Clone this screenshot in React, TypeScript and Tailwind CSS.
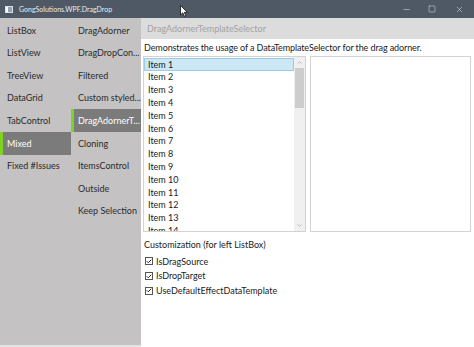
import React from "react";
import { Minus, Square, X, ChevronUp, ChevronDown, Check } from "lucide-react";

const leftNav = ["ListBox", "ListView", "TreeView", "DataGrid", "TabControl", "Mixed", "Fixed #Issues"];
const rightNav = [
  "DragAdorner",
  "DragDropCon...",
  "Filtered",
  "Custom styled...",
  "DragAdornerT...",
  "Cloning",
  "ItemsControl",
  "Outside",
  "Keep Selection",
];

const items = Array.from({ length: 14 }, (_, i) => `Item ${i + 1}`);

const NavItem: React.FC<{ label: string; selected?: boolean }> = ({ label, selected }) => (
  <div
    className={
      selected
        ? "h-[22.6px] flex items-center pl-[4px] whitespace-nowrap bg-[#7b7b7b] text-white border-l-[3px] border-[#7ed321]"
        : "h-[22.6px] flex items-center pl-[4px] whitespace-nowrap text-[#2b2b2b] border-l-[3px] border-transparent"
    }
  >
    {label}
  </div>
);

const CheckRow: React.FC<{ label: string }> = ({ label }) => (
  <div className="h-[14.7px] flex items-center gap-[3px] pl-[4px]">
    <div className="w-[8px] h-[8px] border border-[#555] bg-white flex items-center justify-center">
      <Check className="w-[7px] h-[7px] text-[#222]" strokeWidth={4} />
    </div>
    <span>{label}</span>
  </div>
);

const App: React.FC = () => {
  return (
    <div className="relative w-[474px] h-[347px] overflow-hidden flex flex-col bg-white text-[9px] font-['Lato',sans-serif] text-[#222]">
      {/* title bar */}
      <div className="h-[18px] bg-[#4f5966] flex items-center text-white">
        <div className="ml-[5px] w-[8px] h-[7px] border border-[#d6dde6] bg-[#8fa3bb] flex">
          <div className="w-[2px] bg-white" />
        </div>
        <span className="ml-[6px] text-[7px] text-[#e8ecf0]">GongSolutions.WPF.DragDrop</span>
        <div className="ml-auto flex items-center text-[#d9dee4]">
          <div className="w-[26px] flex justify-center">
            <Minus className="w-[9px] h-[9px]" strokeWidth={1.5} />
          </div>
          <div className="w-[26px] flex justify-center">
            <Square className="w-[8px] h-[8px]" strokeWidth={1.5} />
          </div>
          <div className="w-[28px] flex justify-center mr-[1px]">
            <X className="w-[9px] h-[9px]" strokeWidth={1.5} />
          </div>
        </div>
      </div>

      <div className="flex-1 flex min-h-0">
        {/* navigation */}
        <div className="w-[141px] bg-[#c4c2c2] flex border-b-[2px] border-[#e4e4e4]">
          <div className="w-[71px] flex flex-col pt-[1px]">
            {leftNav.map((l) => (
              <NavItem key={l} label={l} selected={l === "Mixed"} />
            ))}
          </div>
          <div className="w-[70px] flex flex-col pt-[1px]">
            {rightNav.map((l) => (
              <NavItem key={l} label={l} selected={l === "DragAdornerT..."} />
            ))}
          </div>
        </div>

        {/* content */}
        <div className="flex-1 flex flex-col">
          <div className="h-[21px] bg-[#dcdcdc] flex items-center pl-[6px] text-[#a3a3a3]">
            DragAdornerTemplateSelector
          </div>
          <div className="pl-[3px] h-[17px] flex items-center tracking-[-0.1px]">
            Demonstrates the usage of a DataTemplateSelector for the drag adorner.
          </div>
          <div className="flex gap-[4px] pl-[2px] pr-[3px] h-[176px]">
            <div className="w-[163px] border border-[#d3d3d3] flex">
              <div className="flex-1 flex flex-col overflow-hidden pt-[1px]">
                {items.map((it, i) => (
                  <div
                    key={it}
                    className={
                      i === 0
                        ? "h-[12.8px] shrink-0 flex items-center pl-[3px] bg-[#cce8f7] border border-[#9ccbe8]"
                        : "h-[12.8px] shrink-0 flex items-center pl-[3px] border border-transparent"
                    }
                  >
                    {it}
                  </div>
                ))}
              </div>
              <div className="w-[11px] bg-[#f0f0f0] flex flex-col items-center">
                <div className="h-[11px] flex items-center justify-center">
                  <ChevronUp className="w-[7px] h-[7px] text-[#9a9a9a]" strokeWidth={2} />
                </div>
                <div className="w-[9px] h-[40px] bg-[#cdcdcd]" />
                <div className="mt-auto h-[11px] flex items-center justify-center">
                  <ChevronDown className="w-[7px] h-[7px] text-[#9a9a9a]" strokeWidth={2} />
                </div>
              </div>
            </div>
            <div className="flex-1 border border-[#d3d3d3]" />
          </div>
          <div className="pl-[3px] h-[20px] flex items-end pb-[1px]">Customization (for left ListBox)</div>
          <div className="pt-[2px] flex flex-col">
            <CheckRow label="IsDragSource" />
            <CheckRow label="IsDropTarget" />
            <CheckRow label="UseDefaultEffectDataTemplate" />
          </div>
        </div>
      </div>

      {/* mouse cursor */}
      <svg className="absolute left-[180px] top-[5px]" width="8" height="12" viewBox="0 0 8 12">
        <path d="M0.5 0.5 L0.5 10 L2.8 7.8 L4.4 11.3 L5.8 10.7 L4.3 7.3 L7.3 7.3 Z" fill="#fff" stroke="#111" strokeWidth="0.8" />
      </svg>
    </div>
  );
};

export default App;
